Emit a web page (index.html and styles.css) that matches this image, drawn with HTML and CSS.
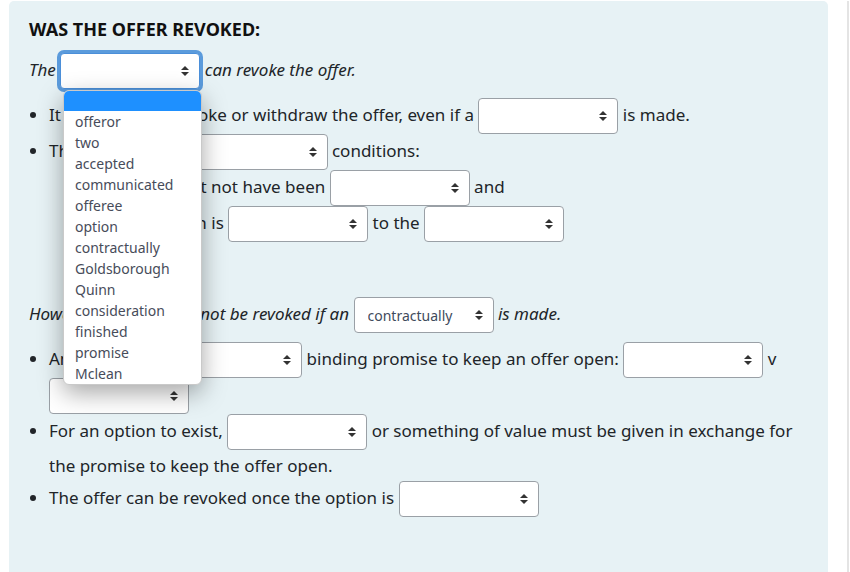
FILE: index.html
```html
<!DOCTYPE html>
<html lang="en">
<head>
    <meta charset="UTF-8">
    <meta name="viewport" content="width=device-width, initial-scale=1.0">
    <title>Was the offer revoked</title>
    <link rel="stylesheet" href="styles.css">
</head>
<body>
    <div class="page">
        <div class="card">
            <h2 class="title">WAS THE OFFER REVOKED:</h2>

            <p class="lead">The <span class="pick"><select class="blank focus"><option></option></select></span> can revoke the offer.</p>

            <ul class="points">
                <li>It is possible to revoke or withdraw the offer, even if a <span class="pick"><select class="blank"><option></option></select></span> is made.</li>
                <li>There are always <span class="pick"><select class="blank"><option></option></select></span> conditions:
                    <ul class="sub">
                        <li>The offer must not have been <span class="pick"><select class="blank"><option></option></select></span> and</li>
                        <li>The revocation is <span class="pick"><select class="blank"><option></option></select></span> to the <span class="pick"><select class="blank"><option></option></select></span></li>
                    </ul>
                </li>
            </ul>

            <p class="lead gap">However, the offer can not be revoked if an <span class="pick"><select class="blank"><option>contractually</option></select></span> is made.</p>

            <ul class="points">
                <li>An option is a <span class="pick"><select class="blank"><option></option></select></span> binding promise to keep an offer open: <span class="pick"><select class="blank"><option></option></select></span> v <span class="pick"><select class="blank"><option></option></select></span></li>
                <li>For an option to exist, <span class="pick"><select class="blank"><option></option></select></span> or something of value must be given in exchange for the promise to keep the offer open.</li>
                <li>The offer can be revoked once the option is <span class="pick"><select class="blank"><option></option></select></span></li>
            </ul>

            <!-- open list of the first blank -->
            <ul class="picker">
                <li class="hl"></li>
                <li>offeror</li>
                <li>two</li>
                <li>accepted</li>
                <li>communicated</li>
                <li>offeree</li>
                <li>option</li>
                <li>contractually</li>
                <li>Goldsborough</li>
                <li>Quinn</li>
                <li>consideration</li>
                <li>finished</li>
                <li>promise</li>
                <li>Mclean</li>
            </ul>
        </div>
    </div>
</body>
</html>
```

FILE: styles.css
```css
body {
    margin: 0;
    padding: 1px 0 0 9px;
    background-color: #fff;
    font-family: "Noto Sans", "Open Sans", sans-serif;
    font-size: 17px;
    color: #212529;
}
.page {
    width: 838px;
    height: 571px;
    border-right: 2px solid #e4e4e4;
    overflow: hidden;
}
.card {
    position: relative;
    width: 779px;
    min-height: 600px;
    padding: 16px 20px;
    background-color: #e7f2f5;
    border-radius: 5px;
}
.title {
    margin: 0 0 12px;
    font-size: 18px;
    font-weight: 700;
    line-height: 24px;
    color: #111;
}
.lead {
    margin: 0;
    font-style: italic;
    line-height: 31px;
}
.lead.gap {
    margin-top: 55px;
}
.points {
    margin: 9px 0 0;
    padding-left: 20px;
    line-height: 31px;
}
.sub {
    margin: 0;
    padding-left: 40px;
    list-style: circle;
}
.pick {
    position: relative;
    display: inline-block;
    vertical-align: middle;
}
.pick::before,
.pick::after {
    content: "";
    position: absolute;
    right: 11px;
    border-left: 4px solid transparent;
    border-right: 4px solid transparent;
    pointer-events: none;
}
.pick::before {
    top: 13px;
    border-bottom: 4px solid #333;
}
.pick::after {
    top: 19px;
    border-top: 4px solid #333;
}
.blank {
    -webkit-appearance: none;
    appearance: none;
    display: block;
    box-sizing: border-box;
    width: 140px;
    height: 36px;
    margin: 0;
    padding: 0 28px 0 13px;
    border: 1px solid #9aa0a6;
    border-radius: 4px;
    background-color: #fff;
    font-family: "Noto Sans", "Open Sans", sans-serif;
    font-size: 14px;
    font-style: normal;
    color: #3f4b5c;
}
.blank.focus {
    border-color: #4b8fd9;
    box-shadow: 0 0 0 3px #5b9bdc;
}
.picker {
    position: absolute;
    left: 54px;
    top: 89px;
    width: 137px;
    margin: 0;
    padding: 0;
    list-style: none;
    background-color: #fff;
    border: 1px solid #c9c9c9;
    border-radius: 6px;
    box-shadow: 0 8px 24px rgba(0, 0, 0, 0.35);
    font-size: 14px;
    line-height: 21px;
    color: #474c5a;
    overflow: hidden;
}
.picker li {
    height: 21px;
    padding-left: 11px;
}
.picker .hl {
    height: 20px;
    background-color: #1e90ff;
}
```
